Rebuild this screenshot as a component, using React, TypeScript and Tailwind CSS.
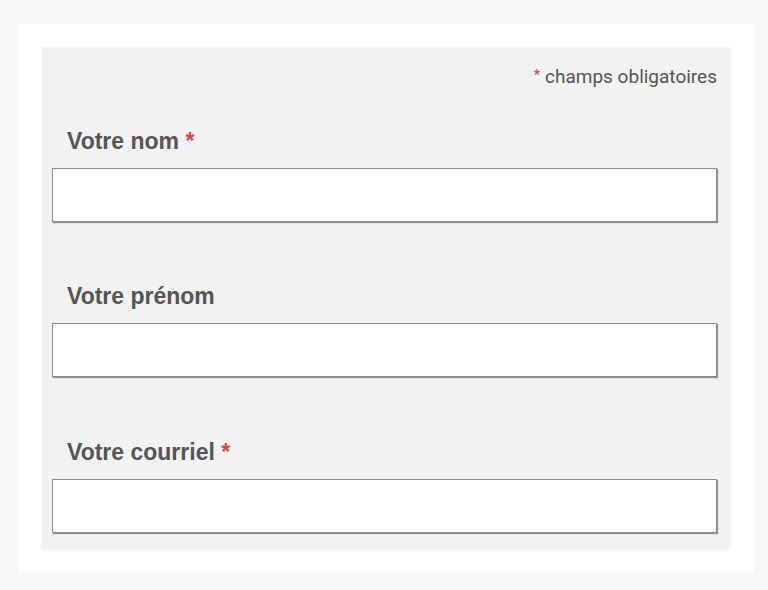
import React from 'react'

const fields = [
  { id: 'nom', label: 'Votre nom', required: true, gap: 'mt-[37px]' },
  { id: 'prenom', label: 'Votre prénom', required: false, gap: 'mt-[60px]' },
  { id: 'courriel', label: 'Votre courriel', required: true, gap: 'mt-[61px]' },
]

export default function App() {
  return (
    <div className="min-h-[590px] w-[768px] bg-[#f7f7f7] pl-[18px] pt-[24px]">
      <div className="w-[736px] h-[549px] bg-white p-[23px]">
        <form className="h-[503px] bg-[#f2f2f2] pl-[11px] pr-[14px] pt-[15px] pb-[17px]">
          <p className="text-right text-[19px] leading-[26px] text-[#555] font-['Roboto',sans-serif]">
            <span className="text-[15px] align-[3px] text-[#d9443f]">*</span> champs obligatoires
          </p>
          {fields.map((f) => (
            <div key={f.id} className={f.gap}>
              <label
                htmlFor={f.id}
                className="block pl-[15px] text-[23px] leading-[28px] font-bold text-[#555] font-['Liberation_Sans',Arial,sans-serif]"
              >
                {f.label}
                {f.required && <span className="text-[#d9443f]"> *</span>}
              </label>
              <input
                id={f.id}
                type="text"
                className="mt-[13px] block w-full h-[54px] bg-white border border-[#8c8c8c] shadow-[1px_1px_1px_rgba(0,0,0,0.4)] outline-none"
              />
            </div>
          ))}
        </form>
      </div>
    </div>
  )
}
